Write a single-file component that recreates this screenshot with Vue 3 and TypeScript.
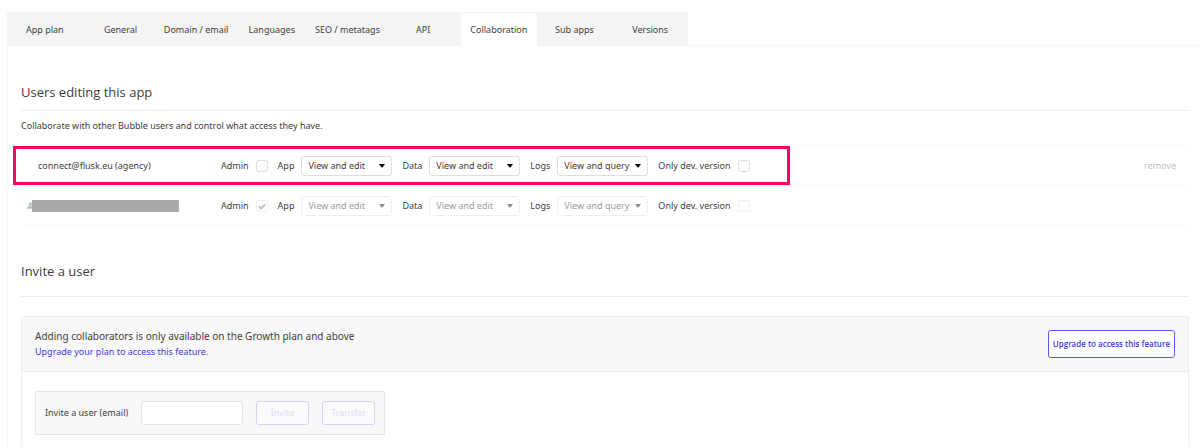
<script setup lang="ts">
import { ref } from 'vue'

interface Access {
  key: string
  label: string
  value: string
  options: string[]
}

interface Collaborator {
  id: string
  name: string
  admin: boolean
  devOnly: boolean
  locked: boolean
  access: Access[]
}

const tabs = ['App plan', 'General', 'Domain / email', 'Languages', 'SEO / metatags', 'API', 'Collaboration', 'Sub apps', 'Versions']
const activeTab = ref('Collaboration')
const email = ref('')

function defaultAccess(): Access[] {
  return [
    { key: 'app', label: 'App', value: 'View and edit', options: ['View and edit'] },
    { key: 'data', label: 'Data', value: 'View and edit', options: ['View and edit'] },
    { key: 'logs', label: 'Logs', value: 'View and query', options: ['View and query'] },
  ]
}

const collaborators = ref<Collaborator[]>([
  { id: 'agency', name: 'connect@flusk.eu (agency)', admin: false, devOnly: false, locked: false, access: defaultAccess() },
  { id: 'owner', name: '', admin: true, devOnly: false, locked: true, access: defaultAccess() },
])
</script>

<template>
  <main class="page">
    <nav class="tabs">
      <button
        v-for="tab in tabs"
        :key="tab"
        type="button"
        class="tab"
        :class="{ active: tab === activeTab }"
        @click="activeTab = tab"
      >{{ tab }}</button>
    </nav>

    <div class="panel">
      <section>
        <h2 class="title">Users editing this app</h2>
        <p class="intro">Collaborate with other Bubble users and control what access they have.</p>

        <ul class="people">
          <li v-for="person in collaborators" :key="person.id" class="person" :class="{ locked: person.locked }">
            <span v-if="person.name" class="name">{{ person.name }}</span>
            <span v-else class="name hidden-name">
              <svg class="avatar" viewBox="0 0 6 9" aria-hidden="true">
                <circle cx="4" cy="2.6" r="2" />
                <path d="M0 8.5C0 6 1.4 5 3 4.7H6V8.5Z" />
              </svg>
              <span class="redaction"></span>
            </span>

            <label class="field">
              Admin
              <span class="check">
                <input v-model="person.admin" type="checkbox" :disabled="person.locked" />
                <svg v-if="person.admin" viewBox="0 0 12 12" aria-hidden="true"><path d="M2.8 6.3L5 8.5L9.3 4.2" /></svg>
              </span>
            </label>

            <label v-for="item in person.access" :key="item.key" class="field">
              {{ item.label }}
              <span class="select">
                <select v-model="item.value" :disabled="person.locked">
                  <option v-for="option in item.options" :key="option">{{ option }}</option>
                </select>
                <svg viewBox="0 0 6 4" aria-hidden="true"><path d="M0 0H6L3.6 3.2Q3 3.9 2.4 3.2Z" /></svg>
              </span>
            </label>

            <label class="field">
              Only dev. version
              <span class="check">
                <input v-model="person.devOnly" type="checkbox" :disabled="person.locked" />
                <svg v-if="person.devOnly" viewBox="0 0 12 12" aria-hidden="true"><path d="M2.8 6.3L5 8.5L9.3 4.2" /></svg>
              </span>
            </label>

            <button v-if="!person.locked" type="button" class="remove">remove</button>
            <span v-if="!person.locked" class="highlight"></span>
          </li>
        </ul>
      </section>

      <section class="invite">
        <h2 class="title invite-title">Invite a user</h2>
        <div class="card">
          <header class="card-head">
            <div>
              <p class="notice">Adding collaborators is only available on the Growth plan and above</p>
              <a href="#" class="link">Upgrade your plan to access this feature.</a>
            </div>
            <button type="button" class="upgrade">Upgrade to access this feature</button>
          </header>
          <div class="card-body">
            <form class="invite-form" @submit.prevent>
              <label for="invite-email">Invite a user (email)</label>
              <input id="invite-email" v-model="email" type="text" />
              <button type="submit" disabled>Invite</button>
              <button type="button" disabled>Transfer</button>
            </form>
          </div>
        </div>
      </section>
    </div>
  </main>
</template>

<style>
body {
  margin: 0;
  background: #fff;
  overflow: hidden;
}
</style>

<style scoped>
* {
  box-sizing: border-box;
}

.page {
  padding: 12px 0 0 7px;
  color: #3d3d3d;
  font: 9px/16px "Noto Sans", "Open Sans", sans-serif;
}

button,
input,
select {
  margin: 0;
  font: inherit;
  color: inherit;
}

h2,
p,
ul {
  margin: 0;
  padding: 0;
}

.tabs {
  display: grid;
  grid-template-columns: repeat(9, minmax(0, 1fr));
  width: 681px;
  max-width: 100%;
  margin-bottom: -1px;
  position: relative;
}

.tab {
  height: 34px;
  padding: 2px 0 0;
  border: 0;
  background: #f4f4f4;
  white-space: nowrap;
}

.tab.active {
  background: #fff;
  box-shadow: inset 0 1px #f4f4f4;
}

.panel {
  padding: 35px 11px 0 13px;
  border: 1px solid #f6f6f6;
  border-right: 0;
  border-bottom: 0;
}

.title {
  padding-bottom: 7px;
  border-bottom: 1px solid #ececec;
  font-family: "Open Sans", "Noto Sans", sans-serif;
  font-size: 13px;
  line-height: 22px;
  font-weight: 400;
}

.intro {
  padding: 7px 0 11px;
}

.people {
  list-style: none;
  border-top: 1px solid #f7f7f7;
}

.person {
  position: relative;
  display: flex;
  align-items: center;
  gap: 10px;
  height: 40px;
  border-bottom: 1px solid #f7f7f7;
}

.name {
  flex: 0 0 190px;
  padding-left: 17px;
}

.hidden-name {
  display: flex;
  align-items: center;
  padding-left: 6px;
}

.avatar {
  width: 5px;
  height: 9px;
  fill: #b4c0c8;
}

.redaction {
  width: 147px;
  height: 12px;
  background: #a9a9a9;
}

.field {
  display: flex;
  align-items: center;
  gap: 7px;
  white-space: nowrap;
}

.check {
  position: relative;
  display: block;
  width: 12px;
  height: 12px;
}

.check input {
  appearance: none;
  display: block;
  width: 12px;
  height: 12px;
  border: 1px solid #dedede;
  border-radius: 3px;
  background: #fff;
}

.check svg {
  position: absolute;
  inset: 0;
  fill: none;
  stroke: #c4c4c4;
  stroke-width: 2;
  pointer-events: none;
}

.select {
  position: relative;
  display: block;
}

.select select {
  appearance: none;
  display: block;
  width: 91px;
  height: 20px;
  padding: 0 6px;
  border: 1px solid #dedede;
  border-radius: 3px;
  background: #fff;
}

.select svg {
  position: absolute;
  top: 8px;
  right: 7px;
  width: 6px;
  height: 4px;
  fill: #000;
  pointer-events: none;
}

.locked .check input,
.locked .select select {
  border-color: #efefef;
}

.locked .select select {
  color: #9c9c9c;
  opacity: 1;
}

.locked .select svg {
  fill: #8c8c8c;
}

.remove {
  margin-left: auto;
  padding: 0 13px;
  border: 0;
  background: none;
  color: #bfbfbf;
}

.highlight {
  position: absolute;
  top: 0;
  bottom: 0;
  left: -8px;
  width: 777px;
  border: 3px solid #ff0066;
  pointer-events: none;
}

.invite {
  padding-top: 34px;
}

.invite-title {
  padding-bottom: 14px;
}

.card {
  margin-top: 19px;
  border: 1px solid #ebebeb;
  border-bottom: 0;
  border-radius: 3px 3px 0 0;
}

.card-head {
  display: flex;
  align-items: center;
  justify-content: space-between;
  height: 55px;
  padding: 0 13px;
  border-bottom: 1px solid #ebebeb;
  background: #f8f8f8;
}

.notice {
  font-size: 10px;
}

.link {
  display: block;
  color: #4338dc;
  text-decoration: none;
}

.upgrade {
  height: 28px;
  padding: 0 4px;
  border: 1px solid #5a5af0;
  border-radius: 3px;
  background: #fff;
  color: #4338dc;
  font-family: "Open Sans", "Noto Sans", sans-serif;
  font-size: 8px;
  font-weight: 600;
}

.card-body {
  padding: 19px 13px;
}

.invite-form {
  display: flex;
  align-items: center;
  gap: 13px;
  width: fit-content;
  padding: 9px;
  border: 1px solid #e6e6e6;
  background: #f8f8f8;
}

.invite-form input {
  width: 102px;
  height: 24px;
  padding: 0 6px;
  border: 1px solid #e3e3e3;
  border-radius: 3px;
  background: #fff;
}

.invite-form button {
  width: 53px;
  height: 24px;
  padding: 0;
  border: 1px solid #d3d1f6;
  border-radius: 3px;
  background: #fbfbfb;
  color: #dcdaf8;
}
</style>
